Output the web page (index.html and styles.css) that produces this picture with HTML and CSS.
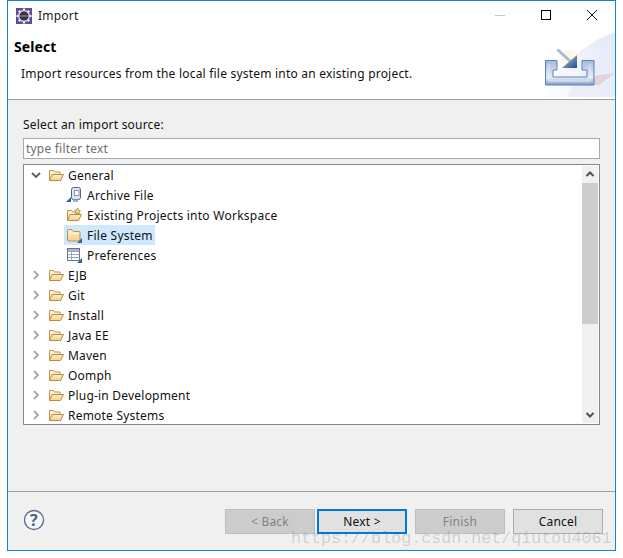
FILE: index.html
```html
<!DOCTYPE html>
<html lang="en">
<head>
<meta charset="utf-8">
<title>Import</title>
<link rel="stylesheet" href="styles.css">
</head>
<body>
<svg class="defs" width="0" height="0" aria-hidden="true">
  <defs>
    <linearGradient id="fold" x1="0" y1="0" x2="0" y2="1">
      <stop offset="0" stop-color="#fdecc4"/>
      <stop offset="1" stop-color="#f5d28e"/>
    </linearGradient>
    <linearGradient id="tray" x1="0" y1="0" x2="0" y2="1">
      <stop offset="0" stop-color="#a3bbdb"/>
      <stop offset="0.7" stop-color="#e4ebf5"/>
      <stop offset="1" stop-color="#7d9dc8"/>
    </linearGradient>
    <linearGradient id="arr" x1="0" y1="0" x2="1" y2="1">
      <stop offset="0" stop-color="#c3d2e6"/>
      <stop offset="1" stop-color="#1f4a8a"/>
    </linearGradient>
    <symbol id="folder" viewBox="0 0 16 16">
      <path d="M1.500 13.500V3.500h4l1.200 1.500h5.300v2.500" fill="#fdf1cf" stroke="#c5934d"/>
      <path d="M1.500 13.500L4 7.500h11.500l-3 6z" fill="url(#fold)" stroke="#bd8a42"/>
    </symbol>
    <symbol id="closed" viewBox="0 0 16 16">
      <path d="M1.500 13V3.500q0-1 1-1h3.500l1.500 2h5.500q1 0 1 1V13q0 1-1 1h-10q-1 0-1-1z" fill="url(#fold)" stroke="#c0914d"/>
      <path d="M2.500 6.500h10.500" stroke="#fff6dc"/>
    </symbol>
    <symbol id="corner" viewBox="0 0 16 16">
      <path d="M16 11v5h-5z" fill="#2a66ad"/>
    </symbol>
  </defs>
</svg>
<main class="window">
  <header class="titlebar">
    <svg class="appicon" viewBox="0 0 16 16">
      <rect width="16" height="16" fill="#5f4d8f"/>
      <path d="M8 .5v15M.5 8h15M2.700 2.700l10.600 10.600M13.300 2.700L2.700 13.300" stroke="#f0f0f2" stroke-width="2.200"/>
      <circle cx="8" cy="8" r="6" fill="#e6e6ea"/>
      <circle cx="8" cy="8" r="4.700" fill="#35334f"/>
      <path d="M3.600 8h8.800" stroke="#77759a" stroke-width="1.500"/>
    </svg>
    <span class="title">Import</span>
    <div class="controls">
      <svg class="ctl" viewBox="0 1 46 30"><path d="M18 15.500h10" stroke="#c6c6c6"/></svg>
      <svg class="ctl" viewBox="0 1 46 30"><rect x="18.500" y="10.500" width="9" height="9" fill="none" stroke="#000"/></svg>
      <svg class="ctl" viewBox="0 1 46 30"><path d="M18 10l10 10M28 10l-10 10" stroke="#111" fill="none"/></svg>
    </div>
  </header>
  <section class="banner">
    <div class="banner-text">
      <h1 class="heading">Select</h1>
      <p class="desc">Import resources from the local file system into an existing project.</p>
    </div>
    <svg class="banner-art" viewBox="0 0 74 66">
      <defs>
        <linearGradient id="sw" x1="0" y1="1" x2="1" y2="0.400">
          <stop offset="0" stop-color="#fff"/>
          <stop offset="1" stop-color="#e6ebf8"/>
        </linearGradient>
      </defs>
      <path d="M0 66C14 40 42 12 74 1V66z" fill="url(#sw)"/>
      <path d="M26 66C36 44 52 28 74 22V66z" fill="#e6ebf8" opacity=".7"/>
      <path d="M53 45l21-3-16 12H53z" fill="#e2d3da"/>
      <circle cx="29" cy="28" r="9" fill="#fdf8df"/>
      <path d="M4.500 29.500h11.500v9.500h-4v7h34v-7h-5v-9.500h12v24.500h-48.500z" fill="url(#tray)" stroke="#5d83b5"/>
      <path d="M8 33v17h41V33" fill="none" stroke="#eef2f9" stroke-opacity=".8"/>
      <path d="M16.500 18.500l14 13" stroke="#a7bcd9" stroke-width="3"/>
      <path d="M36 24v13H21z" fill="url(#arr)"/>
    </svg>
  </section>
  <section class="body">
    <label class="src-label" for="filter">Select an import source:</label>
    <input class="filter" id="filter" type="text" placeholder="type filter text">
    <div class="tree">
      <ul class="rows">
        <li class="row"><svg class="tw open" viewBox="0 0 10 10"><path d="M1 3l4 4 4-4"/></svg><svg class="ic"><use href="#folder"/></svg><span class="lbl">General</span></li>
        <li class="row child"><svg class="ic" viewBox="0 0 16 16"><rect x="5.500" y=".5" width="9" height="12" rx="2" fill="#dfe5ee" stroke="#4f648a"/><rect x="8.500" y="3.500" width="4.500" height="5" fill="#fff" stroke="#8a97ad"/><path d="M7 12.500h5v2.500H7z" fill="#9fb0c8"/><path d="M4 10v5H-1z" transform="translate(1 0)" fill="#2a66ad"/></svg><span class="lbl">Archive File</span></li>
        <li class="row child"><svg class="ic" viewBox="0 0 16 16"><use href="#folder"/><path d="M11.500 1l1 2 2 .5-1.500 1.500.3 2-1.800-1-1.800 1 .3-2L8.500 3.500l2-.5z" fill="#f5d77e" stroke="#8d6f2b" stroke-width=".6"/></svg><span class="lbl">Existing Projects into Workspace</span></li>
        <li class="row child selected"><span class="sel"><svg class="ic"><use href="#closed"/><use href="#corner"/></svg><span class="lbl">File System</span></span></li>
        <li class="row child"><svg class="ic" viewBox="0 0 16 16"><rect x="1.500" y="1.500" width="12" height="12" fill="#fff" stroke="#65748a"/><path d="M1.500 4.500h12M1.500 7.500h12M1.500 10.500h12M5.500 4.500v9" stroke="#9aa7b8"/><path d="M2 2h11v2H2z" fill="#a9b7c9"/><path d="M16 11v5h-5z" fill="#2a66ad"/></svg><span class="lbl">Preferences</span></li>
        <li class="row"><svg class="tw" viewBox="0 0 10 10"><path d="M3 1l4 4-4 4"/></svg><svg class="ic"><use href="#folder"/></svg><span class="lbl">EJB</span></li>
        <li class="row"><svg class="tw" viewBox="0 0 10 10"><path d="M3 1l4 4-4 4"/></svg><svg class="ic"><use href="#folder"/></svg><span class="lbl">Git</span></li>
        <li class="row"><svg class="tw" viewBox="0 0 10 10"><path d="M3 1l4 4-4 4"/></svg><svg class="ic"><use href="#folder"/></svg><span class="lbl">Install</span></li>
        <li class="row"><svg class="tw" viewBox="0 0 10 10"><path d="M3 1l4 4-4 4"/></svg><svg class="ic"><use href="#folder"/></svg><span class="lbl">Java EE</span></li>
        <li class="row"><svg class="tw" viewBox="0 0 10 10"><path d="M3 1l4 4-4 4"/></svg><svg class="ic"><use href="#folder"/></svg><span class="lbl">Maven</span></li>
        <li class="row"><svg class="tw" viewBox="0 0 10 10"><path d="M3 1l4 4-4 4"/></svg><svg class="ic"><use href="#folder"/></svg><span class="lbl">Oomph</span></li>
        <li class="row"><svg class="tw" viewBox="0 0 10 10"><path d="M3 1l4 4-4 4"/></svg><svg class="ic"><use href="#folder"/></svg><span class="lbl">Plug-in Development</span></li>
        <li class="row"><svg class="tw" viewBox="0 0 10 10"><path d="M3 1l4 4-4 4"/></svg><svg class="ic"><use href="#folder"/></svg><span class="lbl">Remote Systems</span></li>
      </ul>
      <div class="scrollbar">
        <svg class="arrow" viewBox="0 0 16 17"><path d="M4.500 10l3.500-3.500 3.500 3.500"/></svg>
        <div class="track"><div class="thumb"></div></div>
        <svg class="arrow" viewBox="0 0 16 17"><path d="M4.500 7l3.500 3.500 3.500-3.500"/></svg>
      </div>
    </div>
  </section>
  <footer class="footer">
    <svg class="help" viewBox="0 0 22 22"><circle cx="11" cy="11" r="9.500" fill="#f7f8fa" stroke="#5d7196" stroke-width="1.400"/><text x="11" y="16.500" class="help-q">?</text></svg>
    <div class="buttons">
      <button class="btn" disabled>&lt; Back</button>
      <button class="btn default">Next &gt;</button>
      <button class="btn gap" disabled>Finish</button>
      <button class="btn gap">Cancel</button>
    </div>
  </footer>
</main>
<div class="watermark">https://blog.csdn.net/qiutou4061</div>
</body>
</html>
```
FILE: styles.css
```css
* { box-sizing: border-box; }
html, body { margin: 0; padding: 0; background: #fff; }
body { position: relative; width: 623px; height: 558px; overflow: hidden; font-family: "Noto Sans", "Open Sans", sans-serif; font-size: 12px; letter-spacing: .21px; color: #111; }
.defs { position: absolute; }
.window { margin-left: 7px; width: 609px; height: 551px; border: 1px solid #1a81d6; display: flex; flex-direction: column; background: #f0f0f0; }
.titlebar { height: 30px; background: #fff; display: flex; align-items: center; padding-left: 8px; }
.appicon { width: 16px; height: 16px; margin-bottom: 1px; }
.title { margin: 0 0 2px 6px; font-size: 12px; color: #222; }
.controls { margin-left: auto; display: flex; }
.ctl { width: 46px; height: 30px; }
.banner { height: 68px; background: #fff; display: flex; justify-content: space-between; }
.banner-text { padding: 7px 0 0 6px; }
.heading { margin: 0; font-size: 14px; font-weight: 700; line-height: 18px; letter-spacing: .1px; color: #000; }
.desc { margin: 10px 0 0 7px; font-size: 12px; line-height: 16px; color: #111; }
.banner-art { width: 74px; height: 66px; align-self: flex-start; }
.body { flex: 1; border-top: 1px solid #a0a0a0; border-bottom: 1px solid #a0a0a0; padding: 17px 15px 0 15px; display: flex; flex-direction: column; }
.src-label { line-height: 16px; height: 16px; margin-bottom: 5px; }
.filter { width: 577px; height: 21px; flex: none; border: 1px solid #a9a9a9; background: #fff; padding: 0 2px; font: inherit; letter-spacing: inherit; outline: none; }
.filter::placeholder { color: #6d6d6d; opacity: 1; }
.tree { width: 577px; height: 261px; flex: none; margin-top: 5px; border: 1px solid #828790; background: #fff; display: flex; }
.rows { list-style: none; margin: 0; padding: 0; flex: 1; overflow: hidden; }
.row { height: 20px; display: flex; align-items: center; padding-left: 7px; }
.child { padding-left: 42px; }
.child .lbl { margin-left: 5px; letter-spacing: .25px; }
.tw { width: 10px; height: 10px; fill: none; stroke: #a6a6a6; stroke-width: 1.800; margin-right: 7px; }
.tw.open { stroke: #5c5c5c; }
.ic { width: 16px; height: 16px; flex: none; overflow: visible; }
.lbl { margin-left: 4px; white-space: nowrap; }
.selected { padding-left: 40px; }
.sel { display: flex; align-items: center; height: 20px; padding-left: 2px; width: 91px; background: #cde8ff; }
.scrollbar { width: 16px; margin: 1px 1px 1px 0; display: flex; flex-direction: column; background: #f0f0f0; }
.arrow { width: 16px; height: 17px; fill: none; stroke: #505050; stroke-width: 2; flex: none; }
.track { flex: 1; }
.thumb { height: 141px; background: #cdcdcd; }
.footer { height: 58px; padding: 17px 12px 0 15px; display: flex; justify-content: space-between; }
.help { width: 22px; height: 22px; }
.help-q { font: 700 16px "Noto Sans", sans-serif; fill: #4b5f85; text-anchor: middle; }
.buttons { display: flex; gap: 2px; height: 25px; }
.btn { width: 90px; height: 25px; border: 1px solid #adadad; background: #e1e1e1; font: inherit; letter-spacing: inherit; color: #111; padding: 0; }
.btn:disabled { background: #ccc; border-color: #bfbfbf; color: #838383; }
.btn.default { border: 2px solid #0078d7; }
.btn.gap { margin-left: 6px; }
.watermark { position: absolute; left: 291px; top: 531px; font: 16.700px/16px "Liberation Mono", monospace; letter-spacing: 0; color: rgba(120,120,120,.28); white-space: nowrap; }
```
